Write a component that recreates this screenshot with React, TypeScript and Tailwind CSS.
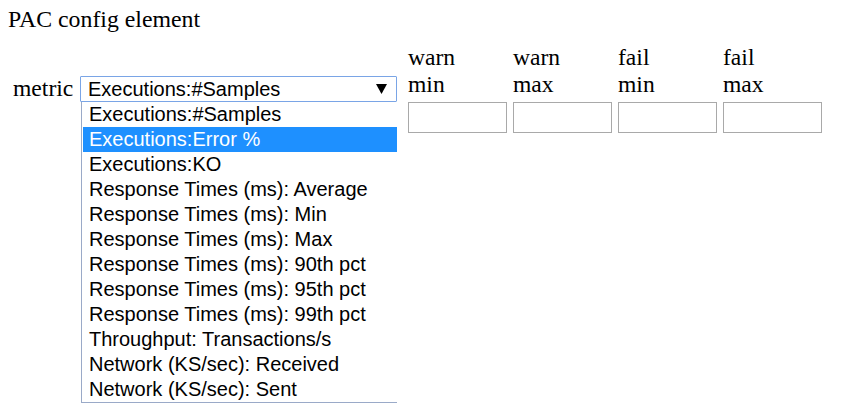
import React from "react";

const options = [
  "Executions:#Samples",
  "Executions:Error %",
  "Executions:KO",
  "Response Times (ms): Average",
  "Response Times (ms): Min",
  "Response Times (ms): Max",
  "Response Times (ms): 90th pct",
  "Response Times (ms): 95th pct",
  "Response Times (ms): 99th pct",
  "Throughput: Transactions/s",
  "Network (KS/sec): Received",
  "Network (KS/sec): Sent",
];

const cols = [
  ["warn", "min"],
  ["warn", "max"],
  ["fail", "min"],
  ["fail", "max"],
];

export default function App() {
  return (
    <div className="w-[856px] h-[420px] bg-white text-black font-['Liberation_Serif',serif] pl-[8px] overflow-hidden">
      <div className="text-[23.8px] leading-[27px] pt-[6px]">PAC config element</div>
      <div className="flex items-center mt-[11px]">
        <div className="text-[23.6px] leading-[27px] pl-[5px] w-[72px]">metric</div>
        <div className="relative w-[317px]">
          <div className="h-[26px] border border-[#7aa5e6] rounded-[1px] flex items-center pl-[7px] pr-[9px] font-['Liberation_Sans',Arial,sans-serif] text-[20px] leading-none">
            <span className="flex-1">Executions:#Samples</span>
            <svg width="11" height="10" viewBox="0 0 11 10"><polygon points="0,0 11,0 5.5,10" fill="#000" /></svg>
          </div>
          <div className="absolute left-[1px] top-[26px] w-[316px] border-l border-b border-[#9aaac8] bg-white font-['Liberation_Sans',Arial,sans-serif] text-[20px]">
            {options.map((o, i) => (
              <div
                key={o}
                className={
                  "h-[25px] leading-[25px] pl-[6px] ml-[1px] whitespace-nowrap " +
                  (i === 1 ? "bg-[#1e90ff] text-white" : "text-black")
                }
              >
                {o}
              </div>
            ))}
          </div>
        </div>
        <div className="flex gap-[6px] ml-[11px]">
          {cols.map(([a, b], i) => (
            <div key={i} className="w-[99px] flex flex-col">
              <div className="text-[23.6px] leading-[26.7px]">
                <div>{a}</div>
                <div>{b}</div>
              </div>
              <div className="h-[31px] border border-[#a9a9a9] mt-[5px]" />
            </div>
          ))}
        </div>
      </div>
    </div>
  );
}
